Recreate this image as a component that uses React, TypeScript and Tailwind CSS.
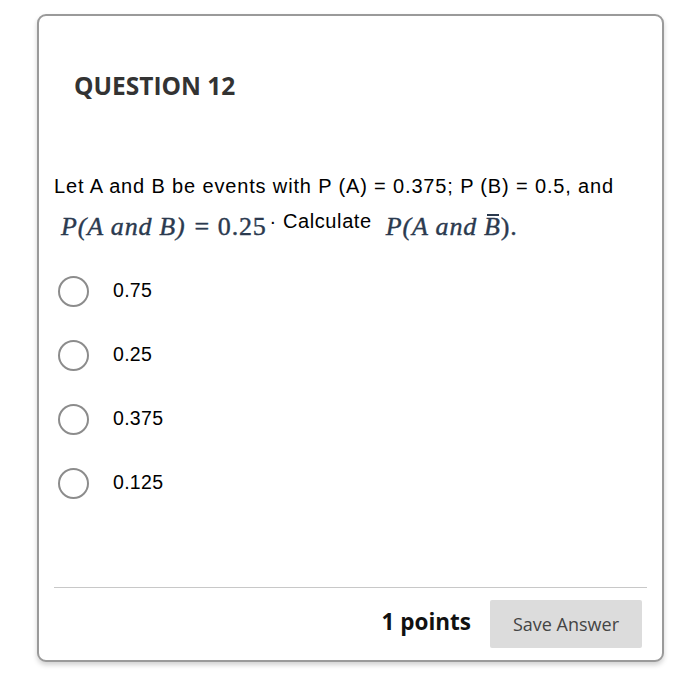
import React from 'react';

const options = ['0.75', '0.25', '0.375', '0.125'];

function Radio() {
    return <span className="block w-[31px] h-[31px] rounded-full border-[2.5px] border-[#8c8c8c] bg-white shrink-0" />;
}

const math = "font-['Liberation_Serif',serif] text-[26px] leading-[28px] tracking-[0.8px] text-[#2b3a4f] [-webkit-text-stroke:0.4px_#2b3a4f]";

export default function App() {
    return (
        <div className="w-[700px] h-[691px] bg-white pt-[14px] pl-[37px]">
            <div className="w-[627px] h-[648px] rounded-[9px] border-2 border-[#9a9a9a] bg-white shadow-[0_3px_5px_rgba(0,0,0,0.18)] flex flex-col">
                <h2 className="mt-[55px] ml-[35px] text-[24.5px] leading-[30px] font-bold text-[#333] font-['Open_Sans',sans-serif]">
                    QUESTION 12
                </h2>

                <div className="mt-[73px] ml-[15px] font-['Liberation_Sans',Arial,sans-serif] text-[20px] leading-[24px] tracking-[0.85px] text-black">
                    Let A and B be events with P (A) = 0.375; P (B) = 0.5, and
                </div>
                <div className="mt-[13px] ml-[22px] flex items-end h-[30px]">
                    <span className={`${math} italic`}>P(A</span>
                    <span className={`${math} italic ml-[7px]`}>and</span>
                    <span className={`${math} italic ml-[7px]`}>B)</span>
                    <span className={`${math} ml-[9px]`}>=</span>
                    <span className={`${math} ml-[8px]`}>0.25</span>
                    <span className="ml-[3px] mb-[10px] font-['Liberation_Sans',Arial,sans-serif] text-[20px] leading-[20px] tracking-[0.6px] text-black">
                        · Calculate
                    </span>
                    <span className={`${math} italic ml-[14px]`}>P(A</span>
                    <span className={`${math} italic ml-[7px]`}>and</span>
                    <span className={`${math} italic ml-[7px] relative`}>
                        B
                        <span className="absolute left-[3px] right-[2px] top-[1px] h-[1.5px] bg-[#2b3a4f]" />
                    </span>
                    <span className={math}>).</span>
                </div>

                <div className="mt-[34px] ml-[19px] flex flex-col gap-[32px]">
                    {options.map((o) => (
                        <label key={o} className="flex items-center h-[32px]">
                            <Radio />
                            <span className="ml-[24px] font-['Liberation_Sans',Arial,sans-serif] text-[19.5px] tracking-[0.3px] text-black">{o}</span>
                        </label>
                    ))}
                </div>

                <div className="mt-auto mx-[15px] border-t border-[#c8c8c8] pt-[12px] pb-[12px] flex items-center justify-end gap-[19px] pr-[5px]">
                    <span className="mb-[4px] font-['Open_Sans',sans-serif] font-bold text-[22.5px] text-[#111]">1 points</span>
                    <button className="w-[152px] h-[48px] rounded-[2px] bg-[#dcdcdc] font-['Open_Sans',sans-serif] text-[18px] text-[#444]">
                        Save Answer
                    </button>
                </div>
            </div>
        </div>
    );
}
